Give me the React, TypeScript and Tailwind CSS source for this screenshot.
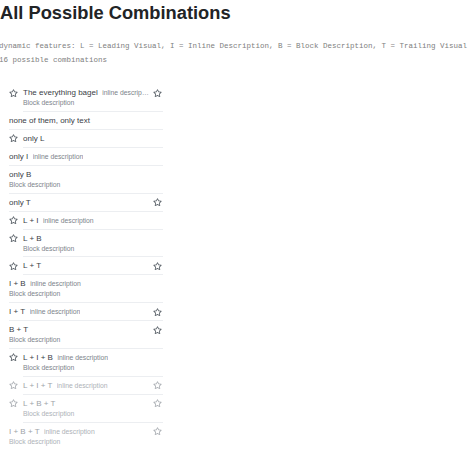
import React from "react";

type Combo = {
  title: string;
  leading?: boolean;
  inline?: boolean;
  block?: boolean;
  trailing?: boolean;
  disabled?: boolean;
};

const combos: Combo[] = [
  { title: "The everything bagel", leading: true, inline: true, block: true, trailing: true },
  { title: "none of them, only text" },
  { title: "only L", leading: true },
  { title: "only I", inline: true },
  { title: "only B", block: true },
  { title: "only T", trailing: true },
  { title: "L + I", leading: true, inline: true },
  { title: "L + B", leading: true, block: true },
  { title: "L + T", leading: true, trailing: true },
  { title: "I + B", inline: true, block: true },
  { title: "I + T", inline: true, trailing: true },
  { title: "B + T", block: true, trailing: true },
  { title: "L + I + B", leading: true, inline: true, block: true },
  { title: "L + I + T", leading: true, inline: true, trailing: true, disabled: true },
  { title: "L + B + T", leading: true, block: true, trailing: true, disabled: true },
  { title: "I + B + T", inline: true, block: true, trailing: true, disabled: true },
];

function StarIcon({ className }: { className?: string }) {
  return (
    <svg viewBox="0 0 16 16" width="9" height="9" fill="currentColor" className={className}>
      <path d="M8 .25a.75.75 0 0 1 .673.418l1.882 3.815 4.21.612a.75.75 0 0 1 .416 1.279l-3.046 2.97.719 4.192a.751.751 0 0 1-1.088.791L8 12.347l-3.766 1.98a.75.75 0 0 1-1.088-.79l.72-4.194L.818 6.374a.75.75 0 0 1 .416-1.28l4.21-.611L7.327.668A.75.75 0 0 1 8 .25Zm0 2.445L6.615 5.5a.75.75 0 0 1-.564.41l-3.097.45 2.24 2.184a.75.75 0 0 1 .216.664l-.528 3.084 2.769-1.456a.75.75 0 0 1 .698 0l2.77 1.456-.53-3.084a.75.75 0 0 1 .216-.664l2.24-2.183-3.096-.45a.75.75 0 0 1-.564-.41L8 2.694Z" />
    </svg>
  );
}

function Row({ item, last }: { item: Combo; last: boolean }) {
  const textColor = item.disabled ? "text-[#9ea3a8]" : "text-[#3b4046]";
  const mutedColor = item.disabled ? "text-[#aeb2b7]" : "text-[#7d848b]";
  const iconColor = item.disabled ? "text-[#aeb2b7]" : "text-[#5f666d]";

  return (
    <li className="flex">
      {item.leading && (
        <span className={`w-[14px] shrink-0 mt-[4px] h-[10px] flex items-center ${iconColor}`}>
          <StarIcon />
        </span>
      )}
      <div
        className={`flex-1 min-w-0 flex pt-[4px] pb-[3px] border-b ${
          last ? "border-transparent" : "border-[#eceef1]"
        }`}
      >
        <div className="flex-1 min-w-0">
          <div className="flex items-baseline gap-[4.5px] leading-[10px]">
            <span className={`text-[8px] whitespace-nowrap ${textColor}`}>{item.title}</span>
            {item.inline && (
              <span className={`text-[6.8px] truncate min-w-0 ${mutedColor}`}>
                inline description
              </span>
            )}
          </div>
          {item.block && (
            <div className={`text-[6.8px] leading-[9.8px] ${mutedColor}`}>Block description</div>
          )}
        </div>
        {item.trailing && (
          <span className={`shrink-0 pl-[4px] pr-[1px] h-[10px] flex items-center ${iconColor}`}>
            <StarIcon />
          </span>
        )}
      </div>
    </li>
  );
}

export default function App() {
  return (
    <div className="bg-white min-h-[450px] w-[474px] overflow-hidden font-['Liberation_Sans',Arial,sans-serif]">
      <h1 className="mt-[2px] text-[18.3px] leading-[21px] font-bold text-[#222426]">
        All Possible Combinations
      </h1>

      <div className="mt-[16px] ml-[-1px] font-['Liberation_Mono','Courier_New',monospace] text-[7.5px] leading-[14px] text-[#808080] whitespace-nowrap">
        <p>
          dynamic features: L = Leading Visual, I = Inline Description, B = Block Description, T =
          Trailing Visual
        </p>
        <p>16 possible combinations</p>
      </div>

      <ul className="mt-[17px] ml-[9px] w-[154px]">
        {combos.map((item, i) => (
          <Row key={item.title} item={item} last={i === combos.length - 1} />
        ))}
      </ul>
    </div>
  );
}
